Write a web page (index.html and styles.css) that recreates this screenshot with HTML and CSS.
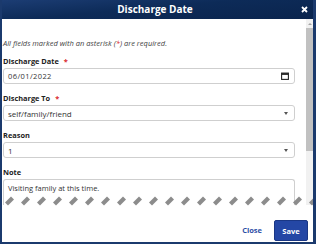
FILE: index.html
```html
<!DOCTYPE html>
<html lang="en">
<head>
    <meta charset="UTF-8">
    <meta name="viewport" content="width=device-width, initial-scale=1.0">
    <title>Discharge Date</title>
    <link rel="stylesheet" href="styles.css">
</head>
<body>

    <div class="dialog">
        <div class="header">
            <h2>Discharge Date</h2>
            <svg class="close-x" width="7" height="7" viewBox="0 0 7 7">
                <path d="M1 1L6 6M6 1L1 6" stroke="#fff" stroke-width="1.8"/>
            </svg>
        </div>

        <div class="main">
            <div class="content">
                <p class="hint">All fields marked with an asterisk (<span class="req">*</span>) are required.</p>

                <div class="field">
                    <label>Discharge Date<span class="req">*</span></label>
                    <div class="box">
                        <span class="date">06/01/2022</span>
                        <svg class="cal" width="8" height="8" viewBox="0 0 8 8">
                            <rect x="0.6" y="1.1" width="6.8" height="6.3" fill="none" stroke="#222" stroke-width="1.1"/>
                            <rect x="0.6" y="1.1" width="6.8" height="1.8" fill="#222"/>
                        </svg>
                    </div>
                </div>

                <div class="field">
                    <label>Discharge To<span class="req">*</span></label>
                    <div class="box">
                        <span>self/family/friend</span>
                        <span class="arrow"></span>
                    </div>
                </div>

                <div class="field">
                    <label>Reason</label>
                    <div class="box">
                        <span>1</span>
                        <span class="arrow"></span>
                    </div>
                </div>

                <div class="field">
                    <label>Note</label>
                    <div class="box note">Visiting family at this time.</div>
                </div>
            </div>

            <div class="scrollbar">
                <span class="up"></span>
                <span class="thumb"></span>
            </div>
        </div>

        <svg class="torn" width="311" height="10">
            <defs>
                <pattern id="teeth" width="16" height="10" patternUnits="userSpaceOnUse">
                    <line x1="4.5" y1="8" x2="10.5" y2="2" stroke="#8c8c8c" stroke-width="4.2"/>
                </pattern>
            </defs>
            <rect width="311" height="10" fill="url(#teeth)"/>
        </svg>

        <div class="footer">
            <button class="link">Close</button>
            <button class="save">Save</button>
        </div>
    </div>

</body>
</html>
```

FILE: styles.css
```css
body { margin: 0; font-family: "Open Sans", "Liberation Sans", sans-serif; }

.dialog {
    width: 316px; height: 244px; box-sizing: border-box; position: relative; overflow: hidden;
    display: flex; flex-direction: column; background: #fff;
    border: 2px solid #1b3a6d; border-top: 0; border-right-width: 3px;
}

.header {
    height: 19px; flex: none; display: flex; align-items: center; justify-content: center;
    background: linear-gradient(175deg, #1c3d74 0, #0d2b58 45%, #0a244d 100%);
    margin: 0 -3px 0 -2px; position: relative; padding-right: 6px;
}
.header h2 { margin: 0; color: #fff; font-size: 10px; font-weight: 700; line-height: 19px; }
.close-x { position: absolute; right: 8px; top: 6px; }

.main { height: 186px; flex: none; display: flex; }
.content { flex: 1; padding: 18px 11px 0 1px; overflow: hidden; }
.hint { margin: 0 0 6px; font-size: 7.5px; line-height: 12px; font-style: italic; color: #444; }
.req { color: #d9262b; }

.field { margin-bottom: 8px; }
.field label { display: block; font-size: 7.4px; font-weight: 700; line-height: 12px; color: #222; margin-bottom: 1px; }
.field label .req { margin-left: 5px; }

.box {
    height: 16px; box-sizing: border-box; border: 1px solid #cfcfcf; border-radius: 3px;
    display: flex; align-items: center; justify-content: space-between;
    padding: 0 5px 0 4px; font-size: 8px; color: #333;
}
.date { font-size: 7.5px; letter-spacing: 0.4px; }
.arrow { width: 0; height: 0; border-left: 2.5px solid transparent; border-right: 2.5px solid transparent; border-top: 3px solid #555; margin-right: 1px; }
.box.note { height: 30px; align-items: flex-start; padding-top: 2px; line-height: 12px; font-size: 7.5px; border-bottom: 0; border-radius: 3px 3px 0 0; }

.scrollbar { width: 7px; background: #f1f1f1; display: flex; flex-direction: column; align-items: center; }
.up { margin-top: 4px; width: 0; height: 0; border-left: 2px solid transparent; border-right: 2px solid transparent; border-bottom: 2.5px solid #a3a3a3; }
.thumb { margin-top: 3px; width: 7px; height: 123px; background: #c1c1c1; }

.torn { position: absolute; left: 0; top: 196px; }

.footer { flex: 1; display: flex; justify-content: flex-end; align-items: flex-end; gap: 12px; padding: 0 5px 1px 0; }
.footer button { font-family: inherit; font-size: 7.5px; font-weight: 700; cursor: pointer; }
.link { border: 0; background: none; color: #2d4fa6; padding: 0; margin-bottom: 6px; }
.save { width: 34px; height: 21px; background: #2447a5; color: #fff; border: 1px solid #1a3785; border-radius: 2px; padding: 0; }
```
